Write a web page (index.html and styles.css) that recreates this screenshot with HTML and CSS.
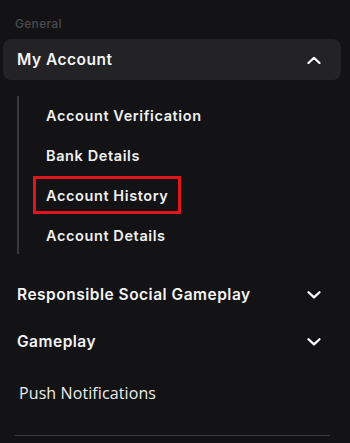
FILE: index.html
```html
<!DOCTYPE html>
<html>
<head>
<meta charset="utf-8">
<link rel="stylesheet" href="styles.css">
</head>
<body>
<nav class="sidebar">
  <div class="section-label">General</div>
  <div class="group open">
    <div class="group-head active">
      <span>My Account</span>
      <svg class="chev" width="14" height="8" viewBox="0 0 14 8"><polyline points="1.5,7 7,1.8 12.5,7" fill="none" stroke="#fff" stroke-width="2.2" stroke-linecap="round" stroke-linejoin="round"/></svg>
    </div>
    <ul class="sub-list">
      <li><a class="sub-item">Account Verification</a></li>
      <li><a class="sub-item">Bank Details</a></li>
      <li><a class="sub-item selected">Account History</a></li>
      <li><a class="sub-item">Account Details</a></li>
    </ul>
  </div>
  <div class="group-head">
    <span>Responsible Social Gameplay</span>
    <svg class="chev" width="14" height="8" viewBox="0 0 14 8"><polyline points="1.5,1.2 7,6.4 12.5,1.2" fill="none" stroke="#fff" stroke-width="2.2" stroke-linecap="round" stroke-linejoin="round"/></svg>
  </div>
  <div class="group-head">
    <span>Gameplay</span>
    <svg class="chev" width="14" height="8" viewBox="0 0 14 8"><polyline points="1.5,1.2 7,6.4 12.5,1.2" fill="none" stroke="#fff" stroke-width="2.2" stroke-linecap="round" stroke-linejoin="round"/></svg>
  </div>
  <div class="plain-item">Push Notifications</div>
  <hr class="divider">
</nav>
</body>
</html>
```
FILE: styles.css
```css
* { box-sizing: border-box; }
html, body {
  margin: 0;
  padding: 0;
  background: #131315;
}
body {
  font-family: Inter, "Liberation Sans", sans-serif;
  color: #f4f4f4;
  width: 350px;
  height: 443px;
  overflow: hidden;
}
.sidebar {
  padding-top: 16px;
}
.section-label {
  padding-left: 15px;
  font-size: 12px;
  line-height: 16px;
  font-weight: 500;
  color: #4b4b4f;
  letter-spacing: 0.3px;
  height: 23px;
}
.group-head {
  display: flex;
  align-items: center;
  justify-content: space-between;
  height: 47px;
  padding: 0 29px 0 17px;
  font-size: 15.5px;
  font-weight: 600;
  letter-spacing: 0.5px;
}
.group-head.active {
  height: 41px;
  margin: 0 9px 0 3px;
  padding: 0 20px 0 14px;
  background: #232325;
  border-radius: 8px;
}
.chev { display: block; }
.sub-list {
  list-style: none;
  margin: 16px 0 17px 17px;
  padding: 0;
  border-left: 2px solid #3a3a3d;
  display: flex;
  flex-direction: column;
  gap: 2px;
}
.sub-item {
  display: inline-flex;
  align-items: center;
  height: 38px;
  margin-left: 14px;
  padding: 0 10px;
  border: 3px solid transparent;
  font-size: 14.5px;
  font-weight: 600;
  letter-spacing: 0.6px;
  color: #f0f0f0;
}
.sub-item.selected {
  border-color: #e0161e;
}
.plain-item {
  display: flex;
  align-items: center;
  height: 50px;
  margin-top: 3px;
  padding-left: 19px;
  font-family: "Open Sans", "Noto Sans", sans-serif;
  font-size: 16px;
  font-weight: 500;
  letter-spacing: 0.1px;
  color: #ececec;
}
.divider {
  margin: 17px 20px 0 15px;
  border: 0;
  border-top: 1px solid #3c3c3f;
}
```
